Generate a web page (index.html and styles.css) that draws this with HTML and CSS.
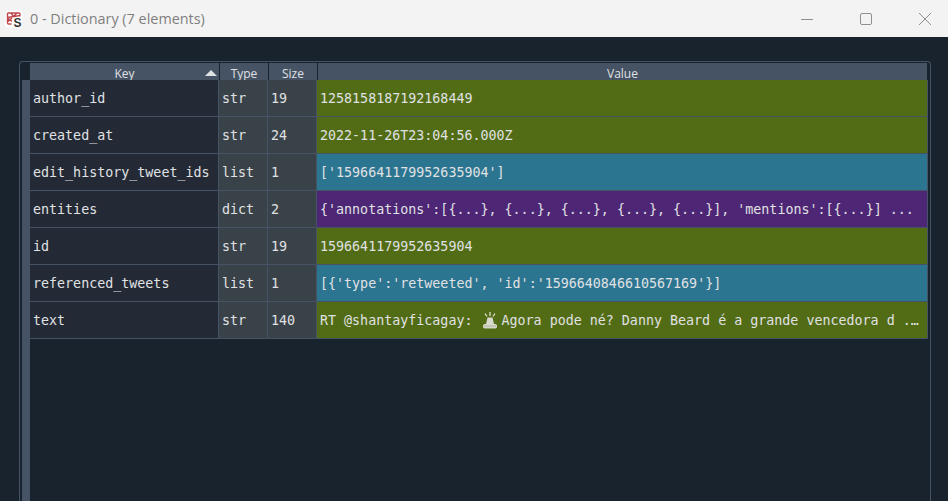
FILE: index.html
```html
<!DOCTYPE html>
<html lang="en">
<head>
<meta charset="utf-8">
<title>0 - Dictionary (7 elements)</title>
<link rel="stylesheet" href="styles.css">
</head>
<body>
<div class="window">
  <header class="titlebar">
    <svg class="app-icon" width="18" height="18" viewBox="0 0 18 18">
      <rect x="0.500" y="0.500" width="17" height="17" rx="3" fill="#fff"/>
      <path d="M2.500 3h11.500q1 0 1 1v2.500M2.500 3v10q0 1 1 1h3M2.500 7.500l6-1 3.500-3.500M6 3l2.500 3.500M2.500 12l4.500-4M3 8l4 3.500M15 5.500l-6 1" fill="none" stroke="#c0484c" stroke-width="1.400"/>
      <text x="8.500" y="16.500" class="app-s">S</text>
    </svg>
    <span class="title">0 - Dictionary (7 elements)</span>
    <div class="controls">
      <svg width="14" height="14" viewBox="0 0 14 14"><path d="M1 7.500h12" stroke="#8f8f8f" stroke-width="1" fill="none"/></svg>
      <svg width="14" height="14" viewBox="0 0 14 14"><rect x="1.500" y="1.500" width="11" height="11" rx="1.500" stroke="#8f8f8f" stroke-width="1" fill="none"/></svg>
      <svg width="14" height="14" viewBox="0 0 14 14"><path d="M1 1l12 12M13 1L1 13" stroke="#8f8f8f" stroke-width="1" fill="none"/></svg>
    </div>
  </header>
  <main class="content">
    <section class="frame">
      <div class="strip"></div>
      <div class="table">
        <div class="head">
          <div class="hcell hkey">Key<svg class="sort" width="12" height="6" viewBox="0 0 12 6"><path d="M6 0l6 6H0z" fill="#e0e1e3"/></svg></div>
          <div class="hcell htype">Type</div>
          <div class="hcell hsize">Size</div>
          <div class="hcell hvalue">Value</div>
        </div>
        <div class="row">
          <div class="cell key">author_id</div><div class="cell type">str</div><div class="cell size">19</div>
          <div class="cell value green">1258158187192168449</div>
        </div>
        <div class="row">
          <div class="cell key">created_at</div><div class="cell type">str</div><div class="cell size">24</div>
          <div class="cell value green">2022-11-26T23:04:56.000Z</div>
        </div>
        <div class="row">
          <div class="cell key">edit_history_tweet_ids</div><div class="cell type">list</div><div class="cell size">1</div>
          <div class="cell value blue">['1596641179952635904']</div>
        </div>
        <div class="row">
          <div class="cell key">entities</div><div class="cell type">dict</div><div class="cell size">2</div>
          <div class="cell value purple">{'annotations':[{...}, {...}, {...}, {...}, {...}], 'mentions':[{...}] ...</div>
        </div>
        <div class="row">
          <div class="cell key">id</div><div class="cell type">str</div><div class="cell size">19</div>
          <div class="cell value green">1596641179952635904</div>
        </div>
        <div class="row">
          <div class="cell key">referenced_tweets</div><div class="cell type">list</div><div class="cell size">1</div>
          <div class="cell value blue">[{'type':'retweeted', 'id':'1596640846610567169'}]</div>
        </div>
        <div class="row">
          <div class="cell key">text</div><div class="cell type">str</div><div class="cell size">140</div>
          <div class="cell value green">RT @shantayficagay: <svg class="siren" width="14" height="17" viewBox="0 0 14 17"><path d="M7 0v4M2 1.500l2 3M12 1.500l-2 3" stroke="#e8e8dc" stroke-width="1.200" fill="none"/><path d="M4.500 5.500h5l1.500 6.500h-8z" fill="#d8d8cc"/><rect x="0.500" y="12.500" width="13" height="3.500" rx="1" fill="#c4c6b8" stroke="#eeeee2" stroke-width="0.800"/></svg>Agora pode né? Danny Beard é a grande vencedora d .…</div>
        </div>
      </div>
    </section>
  </main>
</div>
</body>
</html>
```
FILE: styles.css
```css
* { box-sizing: border-box; }
html, body { margin: 0; padding: 0; }
body { background: #19232d; overflow: hidden; }
.window { width: 948px; height: 501px; display: flex; flex-direction: column; overflow: hidden; }
.titlebar { height: 37px; background: #f3f3f3; display: flex; align-items: center; padding-left: 5px; flex: none; }
.app-icon { flex: none; }
.app-s { font: bold 12px "Liberation Sans", sans-serif; fill: #333; }
.title { font: 14.4px/20px "Open Sans", "Noto Sans", sans-serif; color: #7f7f7f; margin-left: 7px; }
.controls { margin-left: auto; display: flex; gap: 45px; padding-right: 16px; }
.controls svg { display: block; }
.content { flex: 1; min-height: 0; padding: 24px 17px 0 19px; }
.frame { height: 100%; display: flex; border: 1px solid #455364; border-bottom: 0; border-radius: 4px 4px 0 0; padding: 1px 2px 0 2px; font-family: "DejaVu Sans Mono", monospace; }
.strip { width: 8px; flex: none; margin-top: 17px; background: #455364; }
.table { flex: 1; min-width: 0; }
.head { display: flex; gap: 1px; height: 17px; }
.hcell { background: #455364; color: #e0e1e3; font: 12px/22px "Open Sans", "Noto Sans", sans-serif; text-align: center; position: relative; overflow: hidden; }
.hkey { width: 189px; }
.htype { width: 48px; }
.hsize { width: 48px; }
.hvalue { width: 609px; }
.sort { position: absolute; right: 2px; top: 7px; }
.row { display: flex; height: 37px; }
.cell { display: flex; align-items: center; padding-left: 3px; height: 37px; border-bottom: 1px solid #455364; border-right: 1px solid #455364; color: #e0e1e3; font-size: 13.33px; white-space: nowrap; overflow: hidden; }
.key { width: 189px; background: #232a35; }
.type { width: 49px; background: #3a4249; }
.size { width: 49px; background: #3a4249; }
.value { width: 611px; white-space: pre; }
.green { background: #516c14; }
.blue { background: #2c7591; }
.purple { background: #4d2675; }
.siren { flex: none; display: block; margin: 0 4px 0 3px; }
```
